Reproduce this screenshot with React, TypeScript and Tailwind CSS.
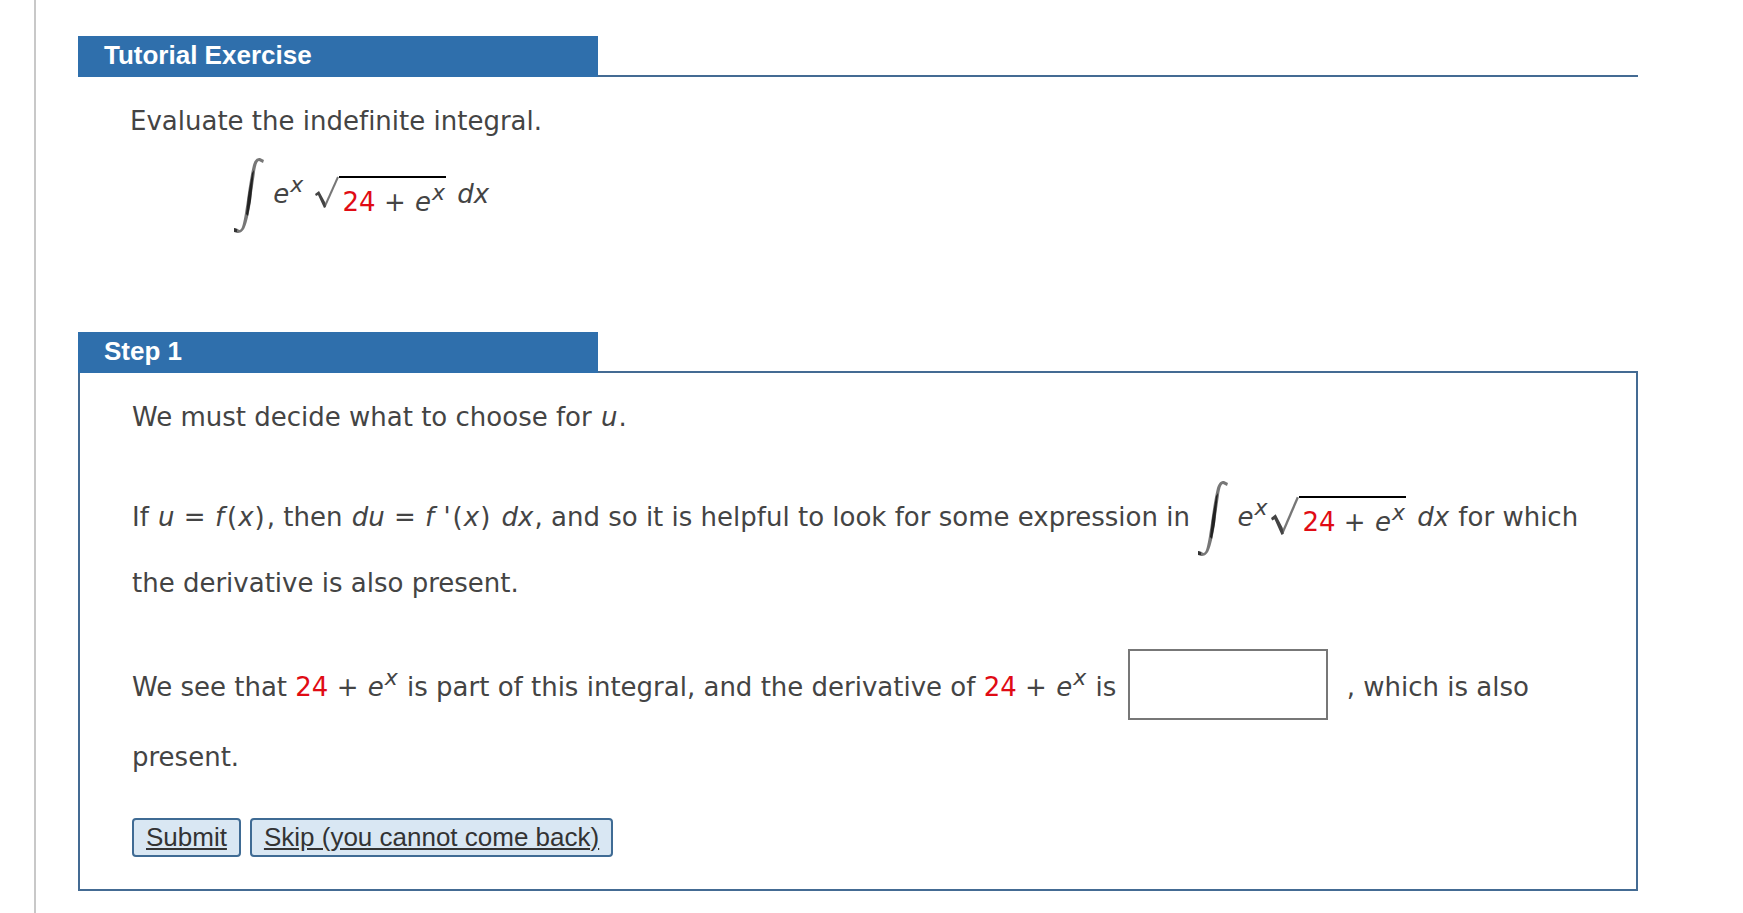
import { useState, type ReactNode } from "react";

function SectionTitle({ children }: { children: ReactNode }) {
  return (
    <div className="border-b-2 border-[#446b93]">
      <h2 className="-mb-0.5 h-[41px] w-1/3 bg-[#2f6fac] pl-[26px] font-['Liberation_Sans',Arial,sans-serif] text-[26px] leading-[39px] font-bold text-white">
        {children}
      </h2>
    </div>
  );
}

function Var({ children }: { children: ReactNode }) {
  return <i className="mx-px">{children}</i>;
}

function OfX() {
  return (
    <span className="mx-0.5">
      (<Var>x</Var>)
    </span>
  );
}

function EToTheX() {
  return (
    <Var>
      e<sup className="top-0 ml-px align-[11px] text-[22px] leading-[0]">x</sup>
    </Var>
  );
}

function Radicand() {
  return (
    <>
      <span className="text-[#e00b14]">24</span> + <EToTheX />
    </>
  );
}

function IntegralSign() {
  return (
    <svg
      viewBox="0 0 30 75"
      className="inline-block h-[75px] w-[30px] align-[-30px]"
      aria-hidden="true"
    >
      <path
        d="M0 70 L4 71 C5 73 7 72 8 69 C10 63 11 55 13 42 C15 27 17 15 19 7 C21 1 23 0 26 0 L30 2 L29 5 L25 3 C23 3 22 8 21 14 C20 22 18 34 17 43 C15 56 13 64 11 69 C9 74 6 75 3 75 L0 74 Z"
        fill="#777"
      />
      <path d="M12 56 L14 38 L18 15 L20 12 L17 42 L14 58 Z" fill="#222" />
      <path d="M0 70 L3 71 L3 74 L0 74 Z" fill="#333" />
    </svg>
  );
}

// Square root with the bar drawn as the top border of its content
function SquareRoot({ tall = false, children }: { tall?: boolean; children: ReactNode }) {
  return (
    <span
      className={`mx-0.5 inline-flex items-start leading-8 ${tall ? "align-[-9px]" : "align-[-5px]"}`}
    >
      <svg
        viewBox="0 0 24 32"
        preserveAspectRatio="none"
        className={tall ? "h-[39px] w-7" : "h-8 w-6"}
        aria-hidden="true"
      >
        <path d="M10 30 L23 1" stroke="#777" strokeWidth="2" fill="none" />
        <path d="M0 18 L4 15 L10 26 L11 31 L9 32 L3 19 L1 20 Z" fill="#444" />
      </svg>
      <span className="border-t-2 border-black pt-2 pl-1">{children}</span>
    </span>
  );
}

export default function App() {
  const [answer, setAnswer] = useState("");

  return (
    <div className="min-h-screen bg-white pl-[34px] font-['DejaVu_Sans',Verdana,sans-serif] text-[26px] text-[#444] [font-variant-ligatures:none]">
      <main className="min-h-screen border-l-2 border-[#c8c8c8] pt-9 pr-[105px] pl-[42px]">
        <section className="h-[296px]">
          <SectionTitle>Tutorial Exercise</SectionTitle>
          <div className="pt-6 pl-[52px]">
            <p className="leading-10">Evaluate the indefinite integral.</p>
            <div className="pt-[17px] pl-[104px] leading-[54px]">
              <IntegralSign /> <EToTheX /> <SquareRoot><Radicand /></SquareRoot> <Var>dx</Var>
            </div>
          </div>
        </section>

        <section>
          <SectionTitle>Step 1</SectionTitle>
          <div className="border-2 border-t-0 border-[#446b93] pt-6 pr-10 pb-8 pl-[52px]">
            <p className="leading-10">
              We must decide what to choose for <Var>u</Var>.
            </p>
            <p className="mt-11 leading-[54px]">
              If <Var>u</Var> = <Var>f</Var><OfX />, then <Var>du</Var> = <Var>f</Var>{" "}
              <i>'</i><OfX /> <Var>dx</Var>, and so it is helpful to look for some
              expression in <IntegralSign /> <EToTheX />
              <SquareRoot tall><Radicand /></SquareRoot> <Var>dx</Var> for which
              <br />
              the derivative is also present.
            </p>
            <p className="mt-[39px] leading-[70px]">
              We see that <Radicand /> is part of this integral, and the derivative of <Radicand /> is{" "}
              <input
                type="text"
                aria-label="Derivative"
                value={answer}
                onChange={(e) => setAnswer(e.target.value)}
                className="mr-2.5 ml-1 h-[71px] w-[200px] border-2 border-[#777] bg-white px-2 align-[2px]"
              />{" "}
              , which is also
              <br />
              present.
            </p>
            <div className="mt-[26px] flex gap-[9px] font-['Liberation_Sans',Arial,sans-serif] text-[#333]">
              <button className="h-[39px] rounded-sm border-2 border-[#3f6b94] bg-[#d9e7f3] px-3 leading-[35px] underline">
                Submit
              </button>
              <button className="h-[39px] rounded-sm border-2 border-[#3f6b94] bg-[#d9e7f3] px-3 leading-[35px] underline">
                Skip (you cannot come back)
              </button>
            </div>
          </div>
        </section>
      </main>
    </div>
  );
}
